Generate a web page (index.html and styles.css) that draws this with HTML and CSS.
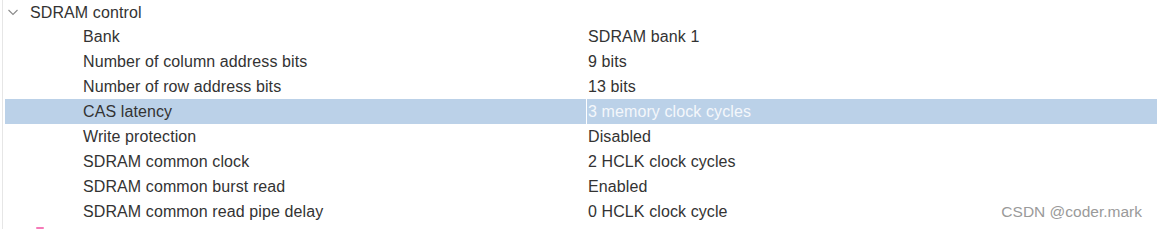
FILE: index.html
```html
<!DOCTYPE html>
<html lang="en">
<head>
  <meta charset="UTF-8" />
  <title>SDRAM control</title>
  <link rel="stylesheet" href="styles.css">
</head>
<body>
  <div class="tree">
    <div class="group">
      <svg class="chevron" viewBox="0 0 10 7">
        <path d="M0.5 1 L5 5.5 L9.5 1" />
      </svg>
      <span>SDRAM control</span>
    </div>

    <div class="row"><div class="label">Bank</div><div class="value">SDRAM bank 1</div></div>
    <div class="row"><div class="label">Number of column address bits</div><div class="value">9 bits</div></div>
    <div class="row"><div class="label">Number of row address bits</div><div class="value">13 bits</div></div>
    <div class="row selected"><div class="label">CAS latency</div><div class="value">3 memory clock cycles</div></div>
    <div class="row"><div class="label">Write protection</div><div class="value">Disabled</div></div>
    <div class="row"><div class="label">SDRAM common clock</div><div class="value">2 HCLK clock cycles</div></div>
    <div class="row"><div class="label">SDRAM common burst read</div><div class="value">Enabled</div></div>
    <div class="row"><div class="label">SDRAM common read pipe delay</div><div class="value">0 HCLK clock cycle</div></div>
  </div>

  <div class="mark"></div>
  <div class="watermark">CSDN @coder.mark</div>
</body>
</html>
```

FILE: styles.css
```css
* { box-sizing: border-box; margin: 0; padding: 0; }

body {
  font-family: 'Liberation Sans', Arial, sans-serif;
  font-size: 16px;
  letter-spacing: 0.1px;
  color: #333;
  background: #fff;
  width: 1157px;
  height: 229px;
  overflow: hidden;
  position: relative;
}

.tree {
  margin-left: 2px;
  border-left: 1px solid #e6e6e6;
  padding-left: 2px;
  height: 229px;
}

.group {
  display: flex;
  align-items: center;
  height: 24px;
  padding-left: 3px;
  padding-top: 1px;
}

.chevron {
  width: 10px;
  height: 7px;
  margin-right: 12px;
  fill: none;
  stroke: #8a8a8a;
  stroke-width: 1.1;
}

.row {
  display: flex;
  height: 25px;
  align-items: center;
}

.label {
  width: 581px;
  padding-left: 78px;
  padding-top: 1px;
  height: 100%;
  display: flex;
  align-items: center;
}

.value {
  flex: 1;
  padding-left: 1px;
  padding-top: 1px;
  height: 100%;
  display: flex;
  align-items: center;
  border-left: 1px solid transparent;
}

.selected {
  background: #bbd1e8;
}

.selected .value {
  color: #f4f7fb;
  border-left-color: #fff;
}

.mark {
  position: absolute;
  left: 36px;
  top: 227px;
  width: 8px;
  height: 2px;
  border-radius: 1px;
  background: #f57ab8;
}

.watermark {
  position: absolute;
  right: 15px;
  top: 203px;
  font-size: 15.5px;
  letter-spacing: 0;
  color: #9a9a9a;
}
```
